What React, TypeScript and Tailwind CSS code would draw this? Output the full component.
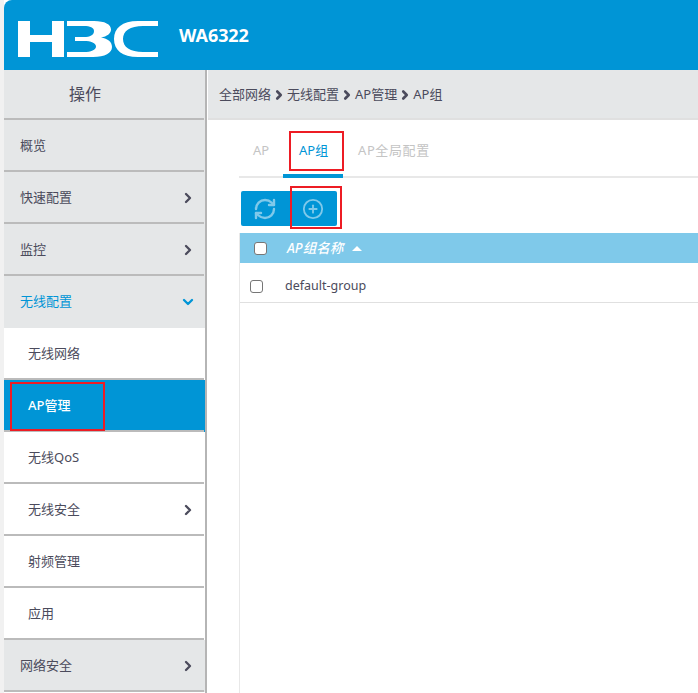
import { ChevronDown, ChevronRight, RefreshCw, CirclePlus } from "lucide-react";

const font = { fontFamily: '"Noto Sans", "Noto Sans CJK SC", sans-serif' };

const Logo = () => (
  <svg className="mt-2" width="142" height="36" viewBox="0 0 142 36" fill="white">
    <path d="M0 0H12V14H34V0H46V36H34V21H12V36H0z" />
    <path d="M49 0H76C87 0 93 3.500 93 8.500C93 12.500 89 15.500 83 16.500C90 17.500 94 21 94 26C94 32 87 36 75 36H49V31H66C73 31 78 29 78 25.500C78 22 73 20 66 20H57V16H66C72 16 76 14 76 10C76 6.500 72 5 66 5H49z" />
    <path d="M140 0V5H125C112 5 105 10 105 18C105 26 112 31 125 31H140V36H120C104 36 96 29 96 18C96 7 104 0 120 0z" />
  </svg>
);

const MenuItem = ({
  label,
  sub,
  active,
  open,
  arrow,
}: {
  label: string;
  sub?: boolean;
  active?: boolean;
  open?: boolean;
  arrow?: boolean;
}) => (
  <div className={`h-[52px] pr-px ${sub && !active ? "bg-white" : active ? "bg-[#0095d6]" : "bg-[#e5e7e8]"}`}>
    <div
      className={`flex h-[52px] items-center justify-between border-b-2 pt-[2px] pr-2 text-[13px] ${
        open ? "border-transparent" : "border-[#bbbbbb]"
      } ${sub ? "pl-6" : "pl-4"} ${active ? "font-medium text-white" : open ? "text-[#0095d6]" : "text-[#4b4b5c]"}`}
    >
      <span>{label}</span>
      {arrow && !open && <ChevronRight className="h-4 w-4" strokeWidth={3.5} />}
      {open && <ChevronDown className="h-4 w-4" strokeWidth={3.5} />}
    </div>
  </div>
);

const Crumb = ({ label, last }: { label: string; last?: boolean }) => (
  <>
    <span>{label}</span>
    {!last && <ChevronRight className="h-[14px] w-[14px] text-[#4b4b5c]" strokeWidth={4.5} />}
  </>
);

const RedBox = ({ className }: { className: string }) => (
  <div className={`absolute border-2 border-[#ed1c24] ${className}`} />
);

export default function App() {
  return (
    <div className="relative h-[693px] w-[698px] overflow-hidden bg-white pl-1" style={font}>
      <div className="absolute top-0 bottom-0 left-0 w-1 bg-[#f1f1f1]" />
      <header className="flex h-[70px] items-center gap-5 rounded-tl-lg bg-[#0095d6] pl-[14px]">
        <Logo />
        <span className="-ml-px text-[18px] font-bold tracking-[-0.1px] text-white">WA6322</span>
      </header>

      <div className="flex h-[623px]">
        <aside className="w-[203px] shrink-0 overflow-hidden border-r-2 border-[#b5b5b5]">
          <div className="h-[50px] bg-[#e5e7e8] pr-px">
            <div className="flex h-[50px] items-center justify-center border-b-2 border-[#bbbbbb] pr-[38px] text-base text-[#4b4b5c]">
              操作
            </div>
          </div>
          <MenuItem label="概览" />
          <MenuItem label="快速配置" arrow />
          <MenuItem label="监控" arrow />
          <MenuItem label="无线配置" open />
          <MenuItem label="无线网络" sub />
          <MenuItem label="AP管理" sub active />
          <MenuItem label="无线QoS" sub />
          <MenuItem label="无线安全" sub arrow />
          <MenuItem label="射频管理" sub />
          <MenuItem label="应用" sub />
          <MenuItem label="网络安全" arrow />
        </aside>

        <main className="min-w-0 flex-1 pl-px">
          <div className="flex h-[50px] items-center gap-px border-b-2 border-[#e0e0e0] bg-[#e5e7e8] pt-[2px] pl-[11px] text-[13px] text-[#4b4b5c]">
            <Crumb label="全部网络" />
            <Crumb label="无线配置" />
            <Crumb label="AP管理" />
            <Crumb label="AP组" last />
          </div>

          <div className="ml-[29px] h-[573px] border-l-2 border-l-transparent">
            <div className="flex h-[58px] border-b-2 border-[#e8e8e8] pl-[14px] text-[13px] text-[#c4c4c4]">
              <div className="flex h-[58px] w-[30px] items-center pt-[3px]">AP</div>
              <div className="flex h-[58px] w-[60px] items-center border-b-4 border-[#0095d6] pt-[7px] pl-[16px] text-[#0095d6]">
                AP组
              </div>
              <div className="flex h-[58px] items-center pt-[3px] pl-[15px] tracking-[0.6px]">AP全局配置</div>
            </div>

            <div className="flex pt-[13px] pb-[7px] pl-[2px]">
              <div className="flex h-[35px] w-24 overflow-hidden rounded-[2px] bg-[#0095d6] text-[#7fc9ea]">
                <div className="flex w-12 items-center justify-center">
                  <RefreshCw className="h-6 w-6" strokeWidth={2.4} />
                </div>
                <div className="flex w-12 items-center justify-center">
                  <CirclePlus className="h-[22px] w-[22px]" strokeWidth={2} />
                </div>
              </div>
            </div>

            <div className="h-[460px] border-l border-[#e8e8e8]">
              <div className="flex h-[30px] items-center bg-[#7fc9ea] text-[13.5px] font-medium text-white italic">
                <input type="checkbox" readOnly className="ml-[14px] h-[13px] w-[13px] appearance-none rounded-[3px] border border-[#767676] bg-white" />
                <span className="ml-5">AP组名称</span>
                <span className="ml-[9px] h-0 w-0 border-x-[5px] border-b-[5px] border-x-transparent border-b-white" />
              </div>
              <div className="flex h-[40px] items-center border-b border-[#e0e0e0] pt-2 text-[12.5px] text-[#4b4b5c]">
                <input type="checkbox" readOnly className="ml-[10px] h-[13px] w-[13px] appearance-none rounded-[3px] border border-[#767676] bg-white" />
                <span className="ml-[22px]">default-group</span>
              </div>
            </div>
          </div>
        </main>
      </div>

      <RedBox className="top-[131px] left-[289px] h-[40px] w-[55px]" />
      <RedBox className="top-[186px] left-[290px] h-[43px] w-[52px]" />
      <RedBox className="top-[382px] left-[10px] h-[49px] w-[95px]" />
    </div>
  );
}
